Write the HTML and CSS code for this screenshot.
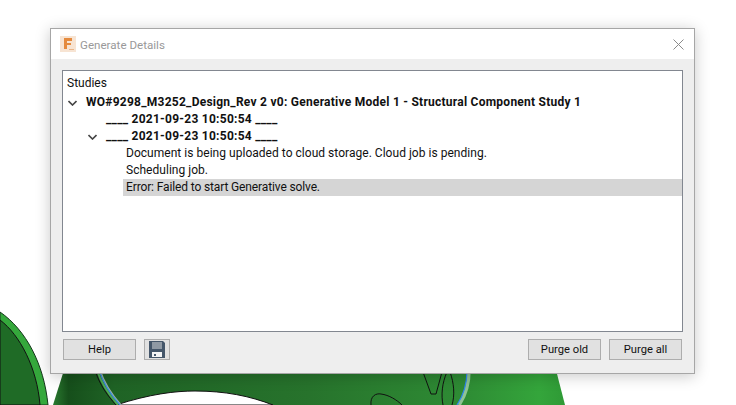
FILE: index.html
```html
<!DOCTYPE html>
<html lang="en">
<head>
<meta charset="utf-8">
<title>Generate Details</title>
<link rel="stylesheet" href="styles.css">
</head>
<body>
<svg class="scene" width="736" height="405" viewBox="0 0 736 405">
  <defs>
    <linearGradient id="body" x1="53" x2="565" y1="0" y2="0" gradientUnits="userSpaceOnUse">
      <stop offset="0" stop-color="#2b7a30"/>
      <stop offset="0.03" stop-color="#164f1b"/>
      <stop offset="0.12" stop-color="#1f6325"/>
      <stop offset="0.5" stop-color="#27732c"/>
      <stop offset="0.8" stop-color="#2e8b34"/>
      <stop offset="0.95" stop-color="#34a53b"/>
      <stop offset="1" stop-color="#2f9a36"/>
    </linearGradient>
  </defs>
  <path d="M0 312 C26 330 44 364 48 405 L0 405Z" fill="#35a83c" stroke="#14361a" stroke-width="1"/>
  <path d="M0 320 C20 335 37 368 40 405 L0 405Z" fill="#1f6b26" stroke="#111" stroke-width="1"/>
  <path d="M53 405 L64 370 L556 370 L565 405Z" fill="url(#body)"/>
  <path d="M116 405 C150 394 175 391 195 391 C225 391 250 396 273 405Z" fill="#fff" stroke="#111" stroke-width="1"/>
  <path d="M95 370 C100 386 108 396 116 405" fill="none" stroke="#111" stroke-width="1"/>
  <path d="M97 370 C102 386 110 396 118 405" fill="none" stroke="#4ea855" stroke-width="2"/>
  <path d="M100 370 C105 386 113 396 121 405" fill="none" stroke="#9db0a0" stroke-width="1.500"/>
  <path d="M99 370 C104 386 112 396 120 405" fill="none" stroke="#3d8fe0" stroke-width="1.200"/>
  <path d="M469 370 C469 385 465 396 459 405" fill="none" stroke="#8fc493" stroke-width="3.500"/>
  <path d="M467 370 C467 385 463 396 457 405" fill="none" stroke="#2f86f0" stroke-width="1.200"/>
  <path d="M371 405 C370 396 376 393 381 394 C389 395 397 400 402 405" fill="none" stroke="#111"/>
  <path d="M423 372 L431 394 L436 394 L442 372 M447 372 C442 383 441 395 443 405 M450 372 C454 383 455 395 452 405" fill="none" stroke="#111"/>
</svg>
<section class="dialog">
  <header class="titlebar">
    <svg class="app-icon" width="16" height="16" viewBox="0 0 16 16">
      <rect width="16" height="16" fill="#f7e4d3"/>
      <path d="M4 2H12V5H7V7H11V9H7V13H4Z" fill="#e58a3e"/>
      <rect x="9" y="13" width="5" height="1" fill="#eab68a"/>
    </svg>
    <span class="title">Generate Details</span>
    <svg class="close" width="11" height="11" viewBox="0 0 11 11">
      <path d="M.5 .5L10.500 10.500M10.500 .5L.5 10.500" stroke="#8a8a8a" fill="none"/>
    </svg>
  </header>
  <div class="content">
    <div class="tree">
      <div class="heading">Studies</div>
      <div class="row row-root bold"><svg class="chev" width="9" height="6" viewBox="0 0 9 6"><path d="M.5 1L4.500 5L8.500 1" fill="none" stroke="#444" stroke-width="1.600"/></svg><span>WO#9298_M3252_Design_Rev 2 v0: Generative Model 1 - Structural Component Study 1</span></div>
      <div class="row row-job bold"><span>____ 2021-09-23 10:50:54 ____</span></div>
      <div class="row row-job bold"><svg class="chev chev-job" width="9" height="6" viewBox="0 0 9 6"><path d="M.5 1L4.500 5L8.500 1" fill="none" stroke="#444" stroke-width="1.600"/></svg><span>____ 2021-09-23 10:50:54 ____</span></div>
      <div class="row row-msg"><span>Document is being uploaded to cloud storage. Cloud job is pending.</span></div>
      <div class="row row-msg"><span>Scheduling job.</span></div>
      <div class="row row-msg selected"><span>Error: Failed to start Generative solve.</span></div>
    </div>
    <footer class="actions">
      <button class="btn">Help</button>
      <button class="btn btn-icon" aria-label="Save">
        <svg width="16" height="17" viewBox="0 0 16 17">
          <path d="M0 0H14L16 2V17H0Z" fill="#44566a"/>
          <rect x="3" y="1" width="10" height="7" fill="#8f99a4"/>
          <rect x="3" y="11" width="10" height="5" fill="#f3f4f5"/>
          <rect x="5" y="13" width="2" height="2" fill="#44566a"/>
        </svg>
      </button>
      <span class="spacer"></span>
      <button class="btn">Purge old</button>
      <button class="btn">Purge all</button>
    </footer>
  </div>
</section>
</body>
</html>
```

FILE: styles.css
```css
html, body { margin: 0; padding: 0; }
body {
  width: 736px;
  height: 405px;
  position: relative;
  overflow: hidden;
  background: #fff;
  font-family: Roboto, "Open Sans", "Liberation Sans", sans-serif;
  font-size: 12px;
  color: #111;
}
.scene { position: absolute; left: 0; top: 0; }
.dialog {
  position: absolute;
  left: 50px;
  top: 28px;
  width: 645px;
  height: 346px;
  box-sizing: border-box;
  border: 1px solid #a6a6a6;
  background: #eee;
  box-shadow: 0 2px 14px rgba(0,0,0,.22);
  display: flex;
  flex-direction: column;
}
.titlebar {
  height: 30px;
  background: #fff;
  display: flex;
  align-items: center;
  padding: 0 10px 0 9px;
  gap: 4px;
  flex: none;
}
.title { color: #999; font-size: 11.600px; padding-top: 1px; }
.close { margin-left: auto; }
.content {
  flex: 1;
  display: flex;
  flex-direction: column;
  padding: 11px 11px 13px;
}
.tree {
  flex: 1;
  box-sizing: border-box;
  border: 1px solid #828790;
  background: #fff;
  padding: 3px 0 0 0;
}
.heading { height: 20px; line-height: 18px; padding-left: 4px; }
.row {
  height: 17px;
  line-height: 17px;
  position: relative;
  white-space: nowrap;
}
.bold { font-weight: 700; letter-spacing: .25px; }
.row-root { padding-left: 23px; }
.row-job { padding-left: 43px; }
.row-msg { padding-left: 63px; letter-spacing: .03px; }
.selected { background: #d5d5d5; margin-left: 60px; padding-left: 3px; letter-spacing: -.13px; }
.chev { position: absolute; left: 5px; top: 6px; letter-spacing: 0; }
.chev-job { left: 25px; }
.actions {
  display: flex;
  align-items: center;
  gap: 8px;
  height: 21px;
  margin-top: 7px;
  padding: 0 1px;
}
.spacer { flex: 1; }
.btn {
  width: 73px;
  height: 21px;
  box-sizing: border-box;
  border: 1px solid #adadad;
  background: #e1e1e1;
  font: inherit;
  font-size: 11.200px;
  color: #111;
  padding: 0;
}
.btn-icon {
  width: 26px;
  display: flex;
  align-items: center;
  justify-content: center;
}
```
